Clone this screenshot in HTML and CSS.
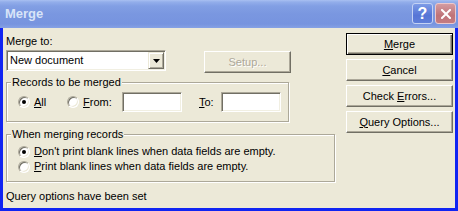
FILE: index.html
```
<!DOCTYPE html>
<html>
<head>
<meta charset="utf-8">
<title>Merge</title>
<link rel="stylesheet" href="styles.css">
</head>
<body>
<div class="window">
  <div class="titlebar">
    <span class="title">Merge</span>
    <div class="tbtns">
      <span class="tb help">?</span>
      <span class="tb close">
        <svg width="10" height="10" viewBox="0 0 10 10"><path d="M1 1 L9 9 M9 1 L1 9" stroke="#fff" stroke-width="2" stroke-linecap="square"/></svg>
      </span>
    </div>
  </div>
  <div class="client">
    <div class="main">
      <div class="left">
        <div class="lbl">Mer<u>g</u>e to:</div>
        <div class="combo-row">
          <div class="combo">
            <span class="combo-text">New document</span>
            <span class="dd-btn"><svg width="7" height="4" viewBox="0 0 7 4"><path d="M0 0 H7 L3.5 4 Z" fill="#000"/></svg></span>
          </div>
          <div class="btn setup disabled">Setup...</div>
        </div>
        <div class="group g1">
          <div class="glabel">Records to be merged</div>
          <div class="grow">
            <div class="opt o-all"><span class="radio checked"></span><span class="rlabel"><u>A</u>ll</span></div>
            <span class="radio"></span><span class="rlabel w-from"><u>F</u>rom:</span>
            <span class="field"></span>
            <span class="rlabel w-to"><u>T</u>o:</span>
            <span class="field"></span>
          </div>
        </div>
        <div class="group g2">
          <div class="glabel">When merging records</div>
          <div class="vrow first"><span class="radio checked"></span><span class="rlabel"><u>D</u>on't print blank lines when data fields are empty.</span></div>
          <div class="vrow"><span class="radio"></span><span class="rlabel"><u>P</u>rint blank lines when data fields are empty.</span></div>
        </div>
      </div>
      <div class="right">
        <div class="btn default"><span><u>M</u>erge</span></div>
        <div class="btn"><span><u>C</u>ancel</span></div>
        <div class="btn"><span>Check <u>E</u>rrors...</span></div>
        <div class="btn"><span><u>Q</u>uery Options...</span></div>
      </div>
    </div>
    <div class="status">Query options have been set</div>
  </div>
</div>
</body>
</html>
```

FILE: styles.css
```
html, body {
  margin: 0;
  padding: 0;
}
body {
  width: 458px;
  height: 211px;
  overflow: hidden;
  font-family: "Liberation Sans", Arial, sans-serif;
  font-size: 11px;
  line-height: 13px;
  color: #000;
}
u { text-decoration: underline; text-underline-offset: 1px; }

.window {
  width: 458px;
  height: 211px;
  display: flex;
  flex-direction: column;
  background: #ece9d8;
}

.titlebar {
  flex: none;
  height: 28px;
  display: flex;
  align-items: flex-start;
  background: linear-gradient(to bottom, #a9c0f1 0px, #93aeea 2px, #829fe4 6px, #7a97e0 14px, #7794df 24px, #86a2e5 28px);
}
.title {
  flex: 1;
  padding-left: 5px;
  line-height: 28px;
  font-family: "Liberation Sans", Arial, sans-serif;
  font-weight: bold;
  font-size: 13px;
  color: #d8e4f8;
}
.tbtns {
  display: flex;
  gap: 2px;
  padding: 3px 2px 0 0;
}
.tb {
  width: 21px;
  height: 21px;
  box-sizing: border-box;
  border-radius: 3px;
  display: flex;
  align-items: center;
  justify-content: center;
  color: #fff;
}
.help {
  background: linear-gradient(to bottom, #7d9be6, #5675d6 60%, #5f7ed9);
  border: 1px solid #c4d2f4;
  font-weight: bold;
  font-size: 16px;
  line-height: 19px;
}
.close {
  background: linear-gradient(to bottom, #d49ca1, #bf7378 60%, #c47c81);
  border: 1px solid #ecc8cb;
}

.client {
  flex: 1;
  display: flex;
  flex-direction: column;
  border: 3px solid #1024f2;
  border-top: 0;
  padding: 0 2px 0 3px;
}
.main {
  display: flex;
  justify-content: space-between;
  padding-top: 5px;
}
.left {
  width: 329px;
  padding-top: 2px;
}
.lbl { height: 13px; }

.combo-row {
  display: flex;
  align-items: flex-start;
  margin-top: 2px;
}
.combo {
  width: 160px;
  height: 21px;
  box-sizing: border-box;
  padding: 1px;
  display: flex;
  background: #fff;
  border: 1px solid;
  border-color: #aca899 #fff #fff #aca899;
  box-shadow: inset 1px 1px 0 #716f64, inset -1px -1px 0 #f1efe2;
}
.combo-text {
  flex: 1;
  padding-left: 2px;
  line-height: 17px;
}
.dd-btn {
  width: 16px;
  height: 17px;
  box-sizing: border-box;
  background: #ece9d8;
  border: 1px solid;
  border-color: #ece9d8 #716f64 #716f64 #ece9d8;
  box-shadow: inset 1px 1px 0 #fff, inset -1px -1px 0 #aca899;
  display: flex;
  align-items: center;
  justify-content: center;
}

.btn {
  height: 22px;
  box-sizing: border-box;
  background: #ece9d8;
  border: 1px solid;
  border-color: #fff #716f64 #716f64 #fff;
  box-shadow: inset -1px -1px 0 #aca899;
  display: flex;
  align-items: center;
  justify-content: center;
}
.btn.default {
  border-color: #000;
  box-shadow: inset 1px 1px 0 #fff, inset -1px -1px 0 #716f64, inset -2px -2px 0 #aca899;
}
.setup {
  width: 87px;
  margin-left: 38px;
  margin-top: 1px;
}
.disabled {
  color: #aca899;
  text-shadow: 1px 1px 0 #fff;
}

.right {
  width: 107px;
  display: flex;
  flex-direction: column;
  gap: 4px;
}

.group {
  box-sizing: border-box;
  border: 1px solid #aca899;
  box-shadow: 1px 1px 0 #fff, inset 1px 1px 0 #fff;
}
.g1 {
  width: 283px;
  margin-top: 9px;
  padding: 0 0 9px 11px;
}
.g2 {
  width: 329px;
  margin-top: 12px;
  padding: 0 0 7px 11px;
}
.glabel {
  width: fit-content;
  margin: -7px 0 0 -7px;
  padding: 0 1px;
  background: #ece9d8;
  height: 13px;
}
.grow {
  display: flex;
  align-items: center;
  height: 20px;
  margin-top: 3px;
}
.opt {
  display: flex;
  align-items: center;
}
.o-all { width: 49px; }
.rlabel { margin-left: 4px; }
.w-from { width: 39px; margin-left: 4px; }
.w-to { width: 22px; margin-left: 17px; }

.radio {
  flex: none;
  width: 12px;
  height: 12px;
  box-sizing: border-box;
  border-radius: 50%;
  background: #fff;
  border: 1px solid;
  border-color: #aca899 #fff #fff #aca899;
  box-shadow: inset 1px 1px 0 #716f64, inset -1px -1px 0 #ece9d8;
  display: flex;
  align-items: center;
  justify-content: center;
}
.radio.checked::after {
  content: "";
  width: 4px;
  height: 4px;
  border-radius: 50%;
  background: #000;
}

.field {
  width: 60px;
  height: 20px;
  box-sizing: border-box;
  background: #fff;
  border: 1px solid;
  border-color: #aca899 #fff #fff #aca899;
  box-shadow: inset 1px 1px 0 #716f64, inset -1px -1px 0 #f1efe2;
}

.vrow {
  display: flex;
  align-items: center;
  height: 15px;
}
.vrow.first { margin-top: 3px; }

.status {
  margin-top: 8px;
  padding-left: 0;
}
```
